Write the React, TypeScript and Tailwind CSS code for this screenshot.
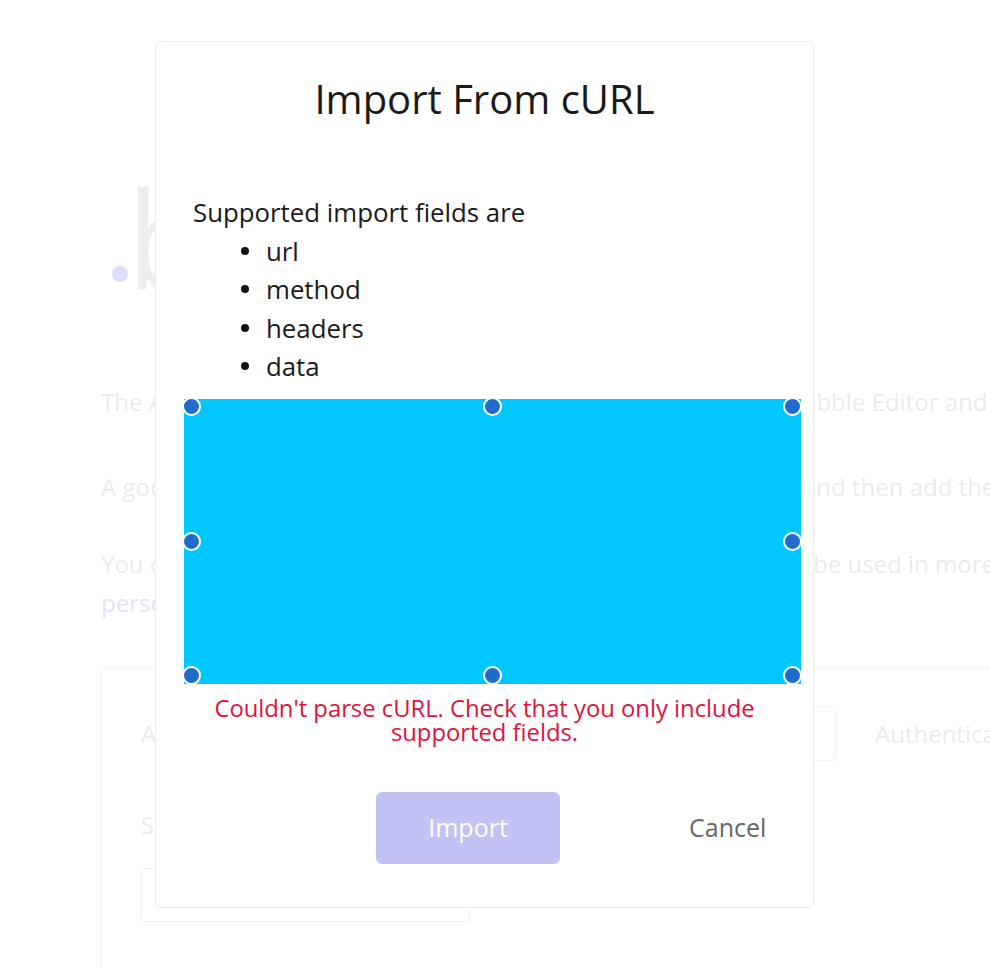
import React from "react";

function Handle({ pos }: { pos: string }) {
  return (
    <span
      className={
        "absolute w-[19px] h-[19px] rounded-full bg-[#1f6ccb] border-2 border-white " + pos
      }
    />
  );
}

export default function App() {
  return (
    <div className="relative w-[990px] h-[968px] overflow-hidden bg-white font-['Open_Sans',sans-serif]">
      {/* faded page behind the modal */}
      <div className="pl-[101px] pt-[171px] text-[24px] text-[#ebebeb] whitespace-nowrap">
        <div className="flex items-end h-[135px] ml-[11px]">
          <span className="w-[16px] h-[16px] rounded-full bg-[#dedefa] mb-[24px]" />
          <span className="text-[135px] leading-[135px] text-[#eeeeee] ml-[-2px]">bubble</span>
        </div>
        <p className="mt-[76px] leading-[39px]">
          The API Connector lets you declare APIs, and use them in the Bubble Editor and in your app.
        </p>
        <p className="mt-[46px] leading-[39px]">
          A good way to get started is to see the API documentation first and then add the calls you need.
        </p>
        <p className="mt-[38px] leading-[39px]">
          You can also share your calls as a plugin, so that those calls can be used in more apps and
        </p>
        <p className="leading-[39px] text-[#e3e3f8]">personal projects.</p>
        <div className="mt-[45px] border border-[#f2f2f2] rounded-md w-[1000px] h-[400px] pl-[39px] pt-[38px]">
          <div className="flex items-center h-[55px]">
            <span className="w-[180px]">API Name</span>
            <div className="w-[515px] h-[55px] border border-[#f2f2f2] rounded" />
            <span className="ml-[39px]">Authentication</span>
          </div>
          <div className="mt-[44px] leading-[39px]">Shared headers for all calls</div>
          <div className="mt-[24px] w-[329px] h-[54px] border border-[#f0f0f0] rounded" />
        </div>
      </div>

      {/* modal */}
      <div className="absolute left-[155px] top-[41px] w-[659px] h-[867px] bg-white border border-[#ebebeb] rounded-md flex flex-col text-[#1a1a1a]">
        <h1 className="pt-[29px] text-center text-[40px] leading-[56px] font-normal">Import From cURL</h1>
        <div className="mt-[66px] pl-[37px] text-[25.8px] leading-[38.5px]">
          <div>Supported import fields are</div>
          <ul>
            {["url", "method", "headers", "data"].map((f) => (
              <li key={f} className="flex items-center">
                <span className="ml-[48px] w-[8px] h-[8px] rounded-full bg-[#111]" />
                <span className="ml-[17px]">{f}</span>
              </li>
            ))}
          </ul>
        </div>
        <div className="relative mt-[13px] ml-[28px] w-[617px] h-[285px] bg-[#00c8ff]">
          <Handle pos="left-[-2px] top-[-2px]" />
          <Handle pos="left-[299px] top-[-2px]" />
          <Handle pos="right-[-1px] top-[-2px]" />
          <Handle pos="left-[-2px] top-[133px]" />
          <Handle pos="right-[-1px] top-[133px]" />
          <Handle pos="left-[-2px] bottom-[-1px]" />
          <Handle pos="left-[299px] bottom-[-1px]" />
          <Handle pos="right-[-1px] bottom-[-1px]" />
        </div>
        <p className="mt-[12px] text-center text-[23.8px] leading-[24px] text-[#e0123e]">
          Couldn't parse cURL. Check that you only include
          <br />
          supported fields.
        </p>
        <div className="mt-[48px] flex items-center">
          <button className="ml-[220px] w-[184px] h-[72px] rounded-md bg-[#c2c2f5] text-white text-[25px]">
            Import
          </button>
          <button className="ml-[129px] text-[25px] text-[#666666]">Cancel</button>
        </div>
      </div>
    </div>
  );
}
